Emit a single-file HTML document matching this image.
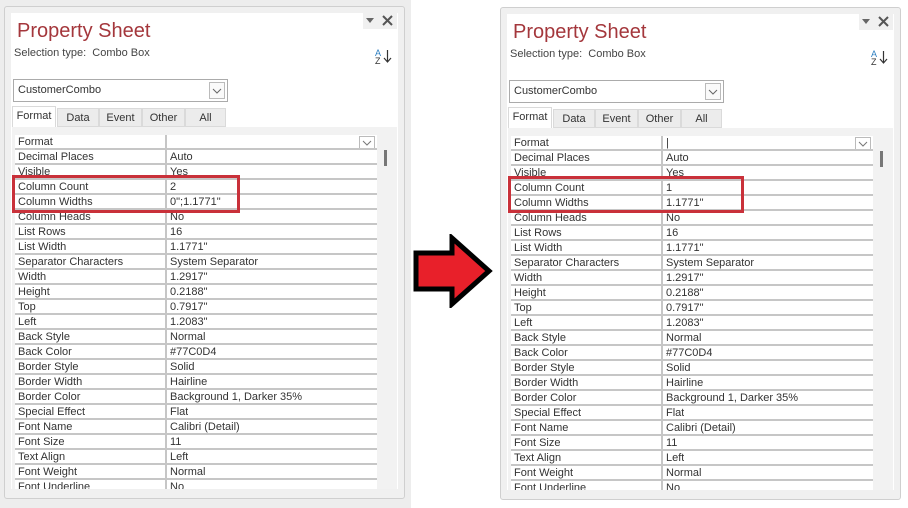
<!DOCTYPE html>
<html><head><meta charset="utf-8"><style>
*{margin:0;padding:0;box-sizing:border-box}
body{width:908px;height:508px;background:#fff;position:relative;overflow:hidden;font-family:"Liberation Sans",sans-serif;color:#333}
.lbg{position:absolute;left:0;top:0;width:411px;height:508px;background:#ededed}
.panel{position:absolute;width:401px;height:493px;background:#f0f0f0;border:1px solid #cfcfcf;border-radius:3px}
.inner{position:absolute;left:6px;top:6px;width:387px;height:476px;background:#fff}
.title{position:absolute;left:6px;top:7px;font-size:20px;color:#a4373c}
.sel{position:absolute;left:3px;top:34px;font-size:11px;color:#444}
.ctl{position:absolute;left:352px;top:0;width:34px;height:16px;background:#f0f0f0;font-size:13px;color:#555}
.az{position:absolute;left:364px;top:36px;font-size:9px;line-height:8px;color:#333}
.combo{position:absolute;left:2px;top:66px;width:215px;height:23px;border:1px solid #ababab;font-size:11px;padding:4px 0 0 4px}
.combo .b{position:absolute;right:2px;top:2px;width:16px;height:17px;border:1px solid #bbb;background:#fafafa}
.tab{position:absolute;top:95px;height:19px;background:#ececec;border:1px solid #dadada;font-size:11px;text-align:center;padding-top:3px}
.grid{position:absolute;left:1px;top:114px;width:385px;height:362px;background:#f2f2f2;overflow:hidden}
.rows{position:absolute;left:3px;top:6px;width:362px;height:356px;overflow:hidden}
.r{height:15px;border-bottom:2px solid #c6c6c6;background:#fff;display:flex;font-size:11px;line-height:14px}
.r span{display:block;padding-left:3px;white-space:nowrap;overflow:hidden}
.r span:first-child{width:152px;border-right:2px solid #c6c6c6}
.thumb{position:absolute;left:372px;top:23px;width:3px;height:16px;background:#777}
.red{position:absolute;border:3px solid #c9313a}
</style></head><body>
<div class="lbg"></div>

<div class="panel" style="left:4px;top:6px">
<div class="inner">
<div class="ctl"><svg width="34" height="16"><path d="M3 5h8l-4 5z" fill="#666"/><path d="M20 3l9 9M29 3l-9 9" stroke="#555" stroke-width="2"/></svg></div>
<div class="title">Property Sheet</div>
<div class="sel">Selection type:&nbsp; Combo Box</div>
<div class="az"><span style="color:#2d7fc1">A</span><br>Z<svg width="9" height="14" style="position:absolute;left:8px;top:1px"><path d="M4.5 0v12M1 8l3.5 4 3.5-4" stroke="#333" fill="none" stroke-width="1.2"/></svg></div>
<div class="combo">CustomerCombo<div class="b"><svg width="14" height="15"><path d="M3 6l4 4 4-4" stroke="#666" fill="none"/></svg></div></div>
<div class="tab" style="left:1px;top:93px;width:44px;height:22px;background:#fff;border-bottom:none">Format</div>
<div class="tab" style="left:46px;width:42px">Data</div>
<div class="tab" style="left:88px;width:43px">Event</div>
<div class="tab" style="left:131px;width:43px">Other</div>
<div class="tab" style="left:174px;width:41px">All</div>
<div class="grid">
<div class="rows" style="top:8px">
<div class="r"><span>Format</span><span style="position:relative;flex:1"><svg width="16" height="13" style="position:absolute;right:2px;top:1px"><rect x=".5" y=".5" width="15" height="12" fill="#fff" stroke="#bbb"/><path d="M4 5l4 4 4-4" stroke="#777" fill="none"/></svg></span></div>
<div class="r"><span>Decimal Places</span><span>Auto</span></div>
<div class="r"><span>Visible</span><span>Yes</span></div>
<div class="r"><span>Column Count</span><span>2</span></div>
<div class="r"><span>Column Widths</span><span>0";1.1771"</span></div>
<div class="r"><span>Column Heads</span><span>No</span></div>
<div class="r"><span>List Rows</span><span>16</span></div>
<div class="r"><span>List Width</span><span>1.1771"</span></div>
<div class="r"><span>Separator Characters</span><span>System Separator</span></div>
<div class="r"><span>Width</span><span>1.2917"</span></div>
<div class="r"><span>Height</span><span>0.2188"</span></div>
<div class="r"><span>Top</span><span>0.7917"</span></div>
<div class="r"><span>Left</span><span>1.2083"</span></div>
<div class="r"><span>Back Style</span><span>Normal</span></div>
<div class="r"><span>Back Color</span><span>#77C0D4</span></div>
<div class="r"><span>Border Style</span><span>Solid</span></div>
<div class="r"><span>Border Width</span><span>Hairline</span></div>
<div class="r"><span>Border Color</span><span>Background 1, Darker 35%</span></div>
<div class="r"><span>Special Effect</span><span>Flat</span></div>
<div class="r"><span>Font Name</span><span>Calibri (Detail)</span></div>
<div class="r"><span>Font Size</span><span>11</span></div>
<div class="r"><span>Text Align</span><span>Left</span></div>
<div class="r"><span>Font Weight</span><span>Normal</span></div>
<div class="r"><span>Font Underline</span><span>No</span></div>
</div>
<div class="thumb"></div>
</div>
</div>
</div>

<div class="panel" style="left:500px;top:7px">
<div class="inner">
<div class="ctl"><svg width="34" height="16"><path d="M3 5h8l-4 5z" fill="#666"/><path d="M20 3l9 9M29 3l-9 9" stroke="#555" stroke-width="2"/></svg></div>
<div class="title">Property Sheet</div>
<div class="sel">Selection type:&nbsp; Combo Box</div>
<div class="az"><span style="color:#2d7fc1">A</span><br>Z<svg width="9" height="14" style="position:absolute;left:8px;top:1px"><path d="M4.5 0v12M1 8l3.5 4 3.5-4" stroke="#333" fill="none" stroke-width="1.2"/></svg></div>
<div class="combo">CustomerCombo<div class="b"><svg width="14" height="15"><path d="M3 6l4 4 4-4" stroke="#666" fill="none"/></svg></div></div>
<div class="tab" style="left:1px;top:93px;width:44px;height:22px;background:#fff;border-bottom:none">Format</div>
<div class="tab" style="left:46px;width:42px">Data</div>
<div class="tab" style="left:88px;width:43px">Event</div>
<div class="tab" style="left:131px;width:43px">Other</div>
<div class="tab" style="left:174px;width:41px">All</div>
<div class="grid">
<div class="rows" style="top:8px">
<div class="r"><span>Format</span><span style="position:relative;flex:1">|<svg width="16" height="13" style="position:absolute;right:2px;top:1px"><rect x=".5" y=".5" width="15" height="12" fill="#fff" stroke="#bbb"/><path d="M4 5l4 4 4-4" stroke="#777" fill="none"/></svg></span></div>
<div class="r"><span>Decimal Places</span><span>Auto</span></div>
<div class="r"><span>Visible</span><span>Yes</span></div>
<div class="r"><span>Column Count</span><span>1</span></div>
<div class="r"><span>Column Widths</span><span>1.1771"</span></div>
<div class="r"><span>Column Heads</span><span>No</span></div>
<div class="r"><span>List Rows</span><span>16</span></div>
<div class="r"><span>List Width</span><span>1.1771"</span></div>
<div class="r"><span>Separator Characters</span><span>System Separator</span></div>
<div class="r"><span>Width</span><span>1.2917"</span></div>
<div class="r"><span>Height</span><span>0.2188"</span></div>
<div class="r"><span>Top</span><span>0.7917"</span></div>
<div class="r"><span>Left</span><span>1.2083"</span></div>
<div class="r"><span>Back Style</span><span>Normal</span></div>
<div class="r"><span>Back Color</span><span>#77C0D4</span></div>
<div class="r"><span>Border Style</span><span>Solid</span></div>
<div class="r"><span>Border Width</span><span>Hairline</span></div>
<div class="r"><span>Border Color</span><span>Background 1, Darker 35%</span></div>
<div class="r"><span>Special Effect</span><span>Flat</span></div>
<div class="r"><span>Font Name</span><span>Calibri (Detail)</span></div>
<div class="r"><span>Font Size</span><span>11</span></div>
<div class="r"><span>Text Align</span><span>Left</span></div>
<div class="r"><span>Font Weight</span><span>Normal</span></div>
<div class="r"><span>Font Underline</span><span>No</span></div>
</div>
<div class="thumb"></div>
</div>
</div>
</div>

<div class="red" style="left:12px;top:175px;width:228px;height:38px"></div>
<div class="red" style="left:508px;top:176px;width:236px;height:37px"></div>

<svg style="position:absolute;left:412px;top:234px" width="82" height="74">
<polygon points="4,19 40,19 40,4 77,37 40,70 40,55 4,55" fill="#e8202a" stroke="#000" stroke-width="5" stroke-linejoin="miter"/>
</svg>
</body></html>
